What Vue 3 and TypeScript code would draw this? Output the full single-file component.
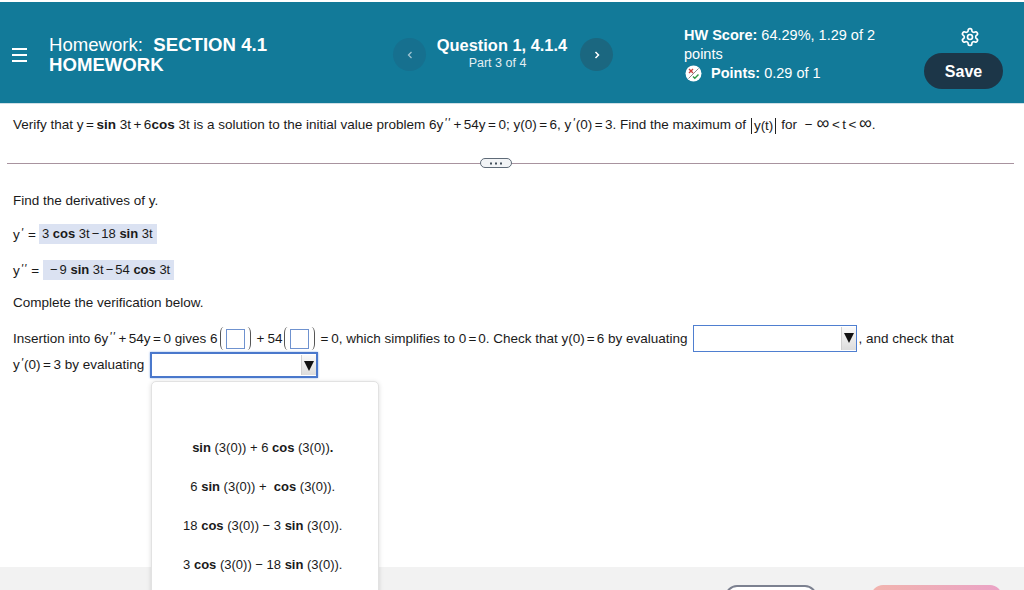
<script setup lang="ts">
const options: { parts: [string, boolean][] }[] = [
  { parts: [['sin', true], [' (3(0)) + 6 ', false], ['cos', true], [' (3(0))', false], ['.', true]] },
  { parts: [['6 ', false], ['sin', true], [' (3(0)) +  ', false], ['cos', true], [' (3(0)).', false]] },
  { parts: [['18 ', false], ['cos', true], [' (3(0)) − 3 ', false], ['sin', true], [' (3(0)).', false]] },
  { parts: [['3 ', false], ['cos', true], [' (3(0)) − 18 ', false], ['sin', true], [' (3(0)).', false]] },
]
</script>

<template>
  <div class="page">
    <header class="bar">
      <button class="menu" aria-label="Menu"><i></i><i></i><i></i></button>
      <h1 class="title">
        <div>Homework: &nbsp;<b>SECTION 4.1</b></div>
        <div><b>HOMEWORK</b></div>
      </h1>
      <div class="nav">
        <span class="circle prev">
          <svg width="8" height="10" viewBox="0 0 8 10"><path d="M5.5 2 2.5 5l3 3" fill="none" stroke="#9fc4d2" stroke-width="1.3"/></svg>
        </span>
        <div class="qinfo">
          <strong>Question 1, 4.1.4</strong>
          <span>Part 3 of 4</span>
        </div>
        <span class="circle next">
          <svg width="8" height="10" viewBox="0 0 8 10"><path d="M2.5 2l3 3-3 3" fill="none" stroke="#fff" stroke-width="1.5"/></svg>
        </span>
      </div>
      <div class="score">
        <div><b>HW Score:</b> 64.29%, 1.29 of 2</div>
        <div>points</div>
        <div class="points">
          <svg class="pts-icon" width="17" height="17" viewBox="0 0 17 17">
            <circle cx="8.5" cy="8.5" r="8" fill="#fff"/>
            <path d="M3.5 13.5 13.5 3.5" stroke="#8a8a8a" stroke-width="1"/>
            <path d="M4 4l4 4M8 4 4 8" stroke="#c8413f" stroke-width="1.4"/>
            <path d="M8 11.5l1.8 1.8 3.7-3.8" fill="none" stroke="#2f9a45" stroke-width="1.4"/>
          </svg>
          <span><b>Points:</b> 0.29 of 1</span>
        </div>
      </div>
      <div class="actions">
        <svg class="gear" width="20" height="20" viewBox="0 0 24 24" fill="none" stroke="#fff" stroke-width="2" stroke-linejoin="round">
          <path d="M12.22 2h-.44a2 2 0 0 0-2 2v.18a2 2 0 0 1-1 1.73l-.43.25a2 2 0 0 1-2 0l-.15-.08a2 2 0 0 0-2.73.73l-.22.38a2 2 0 0 0 .73 2.73l.15.1a2 2 0 0 1 1 1.72v.51a2 2 0 0 1-1 1.74l-.15.09a2 2 0 0 0-.73 2.73l.22.38a2 2 0 0 0 2.73.73l.15-.08a2 2 0 0 1 2 0l.43.25a2 2 0 0 1 1 1.73V20a2 2 0 0 0 2 2h.44a2 2 0 0 0 2-2v-.18a2 2 0 0 1 1-1.73l.43-.25a2 2 0 0 1 2 0l.15.08a2 2 0 0 0 2.73-.73l.22-.39a2 2 0 0 0-.73-2.73l-.15-.08a2 2 0 0 1-1-1.74v-.5a2 2 0 0 1 1-1.74l.15-.09a2 2 0 0 0 .73-2.73l-.22-.38a2 2 0 0 0-2.73-.73l-.15.08a2 2 0 0 1-2 0l-.43-.25a2 2 0 0 1-1-1.73V4a2 2 0 0 0-2-2z"/>
          <circle cx="12" cy="12" r="3"/>
        </svg>
        <button class="save">Save</button>
      </div>
    </header>

    <main class="main">
      <p class="problem">Verify that y<span class="op">=</span><b>sin</b> 3t<span class="op">+</span>6<b>cos</b> 3t is a solution to the initial value problem 6y<i class="pr">''</i><span class="op">+</span>54y<span class="op">=</span>0; y(0)<span class="op">=</span>6, y<i class="pr">'</i>(0)<span class="op">=</span>3. Find the maximum of <span class="abs">y(t)</span> for <span class="op wide">−</span><span class="inf">∞</span><span class="op">&lt;</span>t<span class="op">&lt;</span><span class="inf">∞</span>.</p>

      <div class="divider">
        <span class="more">
          <svg width="14" height="3" viewBox="0 0 14 3"><g fill="#44505c"><rect x="1" y="0.5" width="2" height="2"/><rect x="6" y="0.5" width="2" height="2"/><rect x="11" y="0.5" width="2" height="2"/></g></svg>
        </span>
      </div>

      <p class="find">Find the derivatives of y.</p>
      <div class="deriv first">
        <span class="lhs l1">y<i class="pr">'</i><span class="op wide">=</span></span>
        <span class="answer a1">3 <b>cos</b> 3t<span class="op snug">−</span>18 <b>sin</b> 3t</span>
      </div>
      <div class="deriv second">
        <span class="lhs l2">y<i class="pr">''</i><span class="op wide">=</span></span>
        <span class="answer a2"><span class="op snug">−</span>9 <b>sin</b> 3t<span class="op snug">−</span>54 <b>cos</b> 3t</span>
      </div>
      <p class="complete">Complete the verification below.</p>

      <div class="line one">
        <span>Insertion into 6y<i class="pr">''</i><span class="op">+</span>54y<span class="op">=</span>0 gives 6</span>
        <span class="slot"><span class="paren left"></span><span class="box"></span><span class="paren right"></span></span>
        <span class="plus">+<span class="gap"></span>54</span>
        <span class="slot"><span class="paren left"></span><span class="box"></span><span class="paren right"></span></span>
        <span class="after">=<span class="gap"></span>0, which simplifies to 0<span class="op snug">=</span>0. Check that y(0)<span class="op snug">=</span>6 by evaluating</span>
        <span class="select s1"><span class="arrow"></span></span>
        <span class="tail">, and check that</span>
      </div>
      <div class="line two">
        <span class="lead">y<i class="pr">'</i>(0)<span class="op">=</span>3 by evaluating</span>
        <span class="select s2">
          <span class="arrow"></span>
          <div class="popup">
            <div v-for="(opt, i) in options" :key="i" class="opt">
              <template v-for="(p, j) in opt.parts" :key="j"><b v-if="p[1]">{{ p[0] }}</b><template v-else>{{ p[0] }}</template></template>
            </div>
          </div>
        </span>
      </div>
    </main>

    <footer class="foot">
      <span class="btn outline"></span>
      <span class="btn pink"></span>
    </footer>
  </div>
</template>

<style scoped>
.page {
  width: 1024px;
  height: 590px;
  overflow: hidden;
  display: flex;
  flex-direction: column;
  background: #fff;
  color: #1a1a1a;
  font-family: "Liberation Sans", Arial, sans-serif;
  font-size: 13.5px;
}
.bar {
  margin-top: 2px;
  height: 101px;
  flex: none;
  display: flex;
  align-items: flex-start;
  background: #127a99;
  border-bottom: 1px solid #cfdfe6;
  color: #fff;
}
.menu {
  margin: 46px 0 0 12px;
  width: 15px;
  height: 14px;
  padding: 0;
  border: 0;
  background: none;
  display: flex;
  flex-direction: column;
  justify-content: space-between;
}
.menu i {
  display: block;
  height: 2px;
  background: #fff;
}
.title {
  margin: 33px 0 0 22px;
  width: 240px;
  font-size: 18.6px;
  line-height: 20px;
  font-weight: 400;
}
.nav {
  margin: 36px 0 0 104px;
  width: 220px;
  display: flex;
  align-items: flex-start;
}
.circle {
  width: 33px;
  height: 33px;
  border-radius: 50%;
  flex: none;
  display: flex;
  align-items: center;
  justify-content: center;
}
.prev { background: #16708f; }
.next { background: #1b6780; }
.qinfo {
  flex: 1;
  display: flex;
  flex-direction: column;
  align-items: center;
  margin-top: -2px;
}
.qinfo strong {
  font-size: 16.4px;
  line-height: 18px;
  margin-right: 2px;
}
.qinfo span {
  font-size: 12.5px;
  line-height: 18px;
  color: #e4eff3;
  margin-right: 11px;
}
.score {
  margin: 24px 0 0 71px;
  width: 204px;
  font-size: 14.5px;
  line-height: 19px;
}
.points {
  display: flex;
  align-items: center;
  gap: 9px;
}
.pts-icon { flex: none; margin-left: 1px; }
.actions {
  margin: 25px 0 0 36px;
  display: flex;
  flex-direction: column;
  align-items: center;
  gap: 6px;
  width: 79px;
}
.gear { margin-left: 12px; }
.save {
  width: 79px;
  height: 36px;
  border: 0;
  border-radius: 18px;
  background: #1c3648;
  color: #fff;
  padding-top: 2px;
  font: 700 16px "Liberation Sans", Arial, sans-serif;
}
.main {
  flex: 1;
  min-height: 0;
  padding: 0 0 0 13px;
}
.main p { margin: 0; }
.problem {
  padding-top: 13px;
  line-height: 15px;
  white-space: nowrap;
}
.op {
  margin: 0 2.5px;
}
.op.wide {
  margin: 0 4px;
}
.op.snug {
  margin: 0 2px;
}
.gap {
  display: inline-block;
  width: 3px;
}
.inf {
  font-size: 18px;
  line-height: 0;
}
.pr {
  font-style: italic;
  font-size: 12px;
  letter-spacing: 1px;
  margin-left: 1px;
  vertical-align: 2px;
  line-height: 0;
}
.abs {
  display: inline-block;
  line-height: 16px;
  vertical-align: -1px;
  padding: 0 2px;
  margin: -1px 1px;
  border-left: 1px solid #222;
  border-right: 1px solid #222;
}
.divider {
  position: relative;
  margin: 30px 0 0 -6px;
  width: 1007px;
  height: 1px;
  background: #a8939f;
}
.more {
  position: absolute;
  left: 473px;
  top: -5px;
  width: 32px;
  height: 10px;
  box-sizing: border-box;
  background: #f2f4f6;
  border: 1px solid #5f6b78;
  border-radius: 5px;
  display: flex;
  align-items: center;
  justify-content: center;
}
.find {
  padding-top: 29px;
  line-height: 15px;
}
.deriv {
  display: flex;
  align-items: center;
  height: 20px;
}
.first { margin-top: 16px; }
.second { margin-top: 16px; }
.lhs { flex: none; white-space: nowrap; }
.l1 { width: 26px; }
.l2 { width: 30px; }
.answer {
  display: block;
  height: 20px;
  line-height: 20px;
  font-size: 13px;
  background: #dbe2f2;
  box-sizing: border-box;
  white-space: nowrap;
}
.a1 { width: 118px; padding-left: 3px; }
.a2 { width: 131px; padding-left: 5px; }
.main .complete {
  margin-top: 15px;
  line-height: 15px;
}
.line {
  display: flex;
  align-items: center;
  white-space: pre;
}
.one { margin-top: 15px; height: 27px; }
.two { height: 26px; }
.lead { margin-top: -2px; }
.slot {
  display: inline-flex;
  align-items: center;
  margin-left: 2px;
}
.paren {
  display: block;
  width: 7px;
  height: 23px;
  box-sizing: border-box;
  border-color: #555;
  border-style: solid;
  border-width: 0;
}
.paren.left {
  border-left-width: 1.5px;
  border-radius: 7px / 12px;
}
.paren.right {
  border-right-width: 1.5px;
  border-radius: 7px / 12px;
}
.box {
  width: 19px;
  height: 20px;
  box-sizing: border-box;
  border: 1px solid #6f92cf;
  background: #fff;
  margin: 0 -1px;
}
.plus { margin-left: 6px; }
.after { margin-left: 5px; }
.select {
  position: relative;
  display: block;
  flex: none;
  box-sizing: border-box;
  background: #fff;
}
.s1 {
  width: 164px;
  height: 27px;
  margin-left: 5px;
  border: 1px solid #4f7fd0;
}
.tail { margin-left: 2px; }
.s2 {
  width: 168px;
  height: 26px;
  margin-left: 6px;
  border: 2px solid #4a78cc;
  box-shadow: 0 0 2px #8fb0e6;
}
.arrow {
  position: absolute;
  right: 0;
  top: 1px;
  width: 14px;
  bottom: 1px;
  background: linear-gradient(#fafafa, #dcdcdc);
  border-left: 1px solid #d0d0d0;
}
.arrow::after {
  content: "";
  position: absolute;
  left: 2px;
  top: 6px;
  border-left: 5px solid transparent;
  border-right: 5px solid transparent;
  border-top: 10px solid #111;
}
.popup {
  position: absolute;
  left: -1px;
  top: 27px;
  width: 228px;
  height: 230px;
  box-sizing: border-box;
  padding: 46px 5px 0 0;
  background: #fff;
  border-radius: 5px;
  border: 1px solid #e2e2e2;
  box-shadow: 0 1px 5px rgba(0, 0, 0, 0.14);
  z-index: 5;
}
.opt {
  height: 39px;
  line-height: 39px;
  font-size: 13px;
  text-align: center;
  color: #1a1a1a;
  white-space: pre;
}
.foot {
  flex: none;
  height: 23px;
  background: #f2f2f2;
  display: flex;
  align-items: flex-start;
  padding: 18px 22px 0 725px;
  box-sizing: border-box;
  gap: 54px;
}
.btn {
  display: block;
  height: 30px;
  box-sizing: border-box;
  border-radius: 12px;
}
.outline {
  width: 92px;
  border: 2px solid #7c8190;
  background: #fff;
}
.pink {
  width: 131px;
  background: linear-gradient(90deg, #f2b4ae, #eba3c6);
}
</style>
